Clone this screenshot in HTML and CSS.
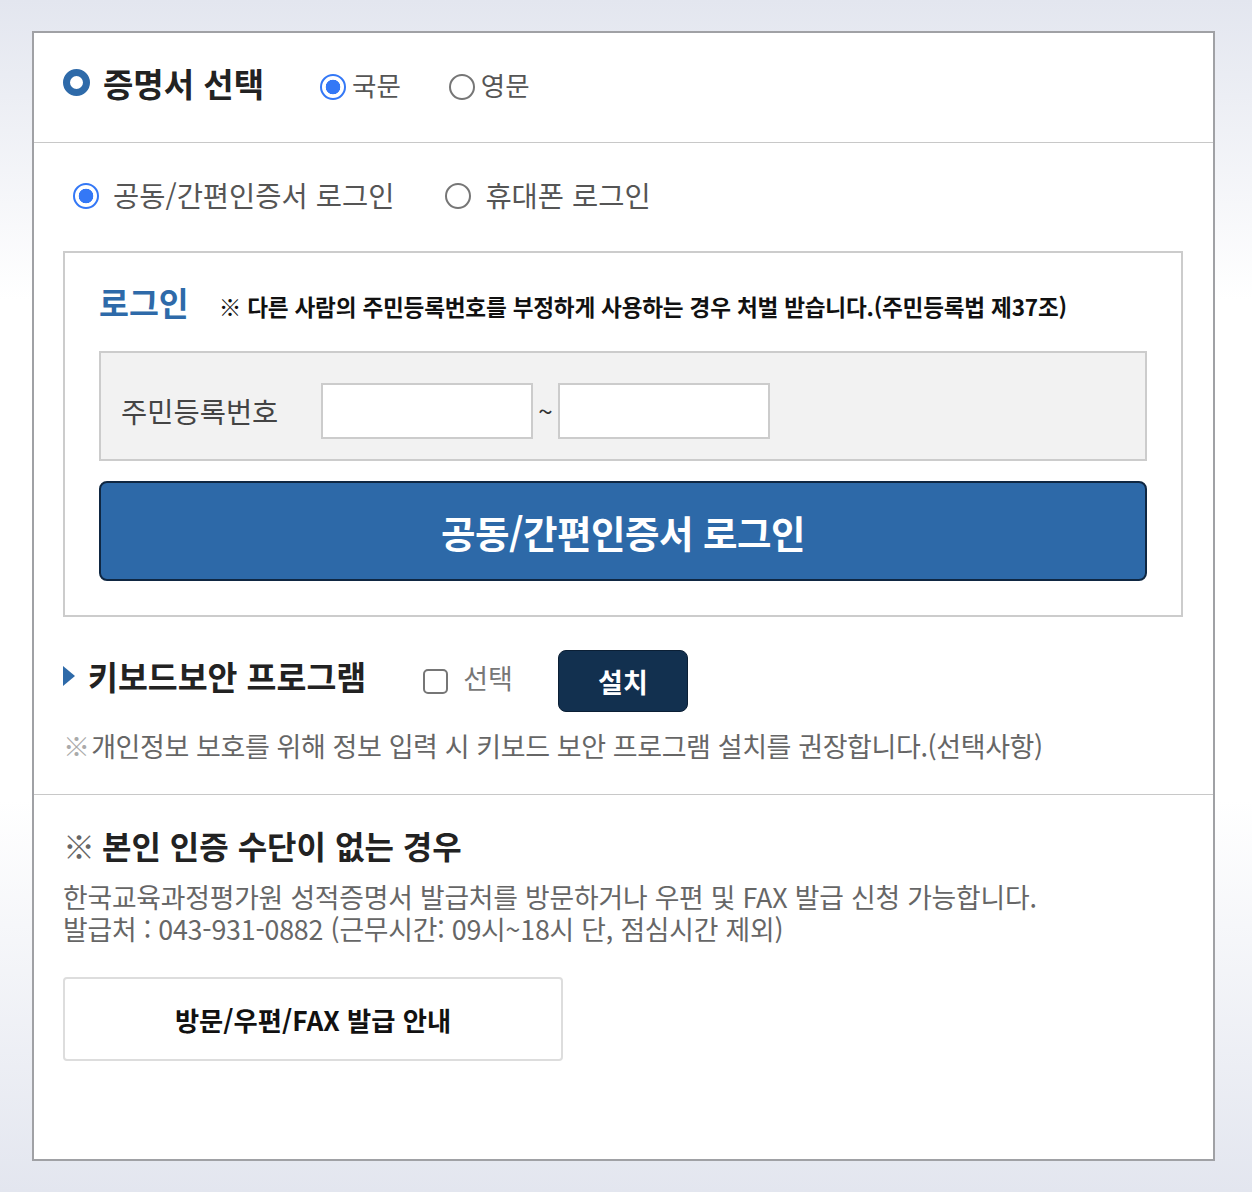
FILE: index.html
```html
<!DOCTYPE html>
<html lang="ko">
<head>
<meta charset="utf-8">
<title>증명서 선택</title>
<link rel="stylesheet" href="styles.css">
</head>
<body>
<div class="card">
  <div class="head">
    <span class="ring"></span>
    <h2 class="head-title">증명서 선택</h2>
    <label class="opt lang first"><input type="radio" class="radio" name="lang" checked><span>국문</span></label>
    <label class="opt lang"><input type="radio" class="radio" name="lang"><span>영문</span></label>
  </div>

  <div class="sec">
    <div class="method">
      <label class="opt m1"><input type="radio" class="radio" name="method" checked><span>공동/간편인증서 로그인</span></label>
      <label class="opt m2"><input type="radio" class="radio" name="method"><span>휴대폰 로그인</span></label>
    </div>

    <div class="login">
      <div class="login-head">
        <h3 class="login-title">로그인</h3>
        <p class="warn">※ 다른 사람의 주민등록번호를 부정하게 사용하는 경우 처벌 받습니다.(주민등록법 제37조)</p>
      </div>
      <div class="idbox">
        <span class="idlabel">주민등록번호</span>
        <input class="idin" type="text">
        <span class="tilde">~</span>
        <input class="idin" type="password">
      </div>
      <button class="loginbtn">공동/간편인증서 로그인</button>
    </div>

    <div class="kb">
      <span class="tri"></span>
      <h3 class="kb-title">키보드보안 프로그램</h3>
      <label class="chk"><input type="checkbox" class="box"><span>선택</span></label>
      <button class="install">설치</button>
    </div>
    <p class="note"><span class="mark">※</span> 개인정보 보호를 위해 정보 입력 시 키보드 보안 프로그램 설치를 권장합니다.(선택사항)</p>
  </div>

  <div class="sec3">
    <h3 class="nt-title"><span class="mark2">※</span> 본인 인증 수단이 없는 경우</h3>
    <div class="desc">
      <p class="desc-line">한국교육과정평가원 성적증명서 발급처를 방문하거나 우편 및 FAX 발급 신청 가능합니다.</p>
      <p class="desc-line">발급처 : 043-931-0882 (근무시간: 09시~18시 단, 점심시간 제외)</p>
    </div>
    <button class="visit">방문/우편/FAX 발급 안내</button>
  </div>
</div>
</body>
</html>
```

FILE: styles.css
```css
* { box-sizing: border-box; }
html, body { margin: 0; padding: 0; }
body {
  min-height: 1192px;
  background: linear-gradient(#e3e6ef 0px, #ffffff 300px, #ffffff 800px, #e3e6ef 1192px);
  font-family: "Noto Sans CJK KR", "Noto Sans", sans-serif;
  padding: 31px 0 0 32px;
}
.card {
  width: 1183px;
  height: 1130px;
  border: 2px solid #a0a1a5;
  background: #fff;
}
h2, h3, p { margin: 0; }

/* header */
.head {
  height: 110px;
  border-bottom: 1px solid #c8c8c8;
  display: flex;
  align-items: center;
  padding: 0 0 10px 29px;
}
.ring {
  width: 27px; height: 27px;
  border: 7px solid #2e6aa9;
  border-radius: 50%;
  filter: blur(0.4px);
  margin-right: 13px;
}
.head-title {
  font-size: 33px;
  font-weight: 700;
  color: #222;
  line-height: 40px;
  margin-right: 56px;
}
.opt { display: flex; align-items: center; cursor: pointer; }
.radio {
  appearance: none;
  -webkit-appearance: none;
  margin: 0;
  width: 26px; height: 26px;
  border: 2px solid #767676;
  border-radius: 50%;
  background: #fff;
  flex: none;
}
.radio:checked {
  border-color: #3478f6;
  background: radial-gradient(circle, #3478f6 0 7px, #fff 7.6px);
}
.lang { margin-top: 8px; }
.lang span { font-size: 26.5px; color: #555; margin-left: 6px; line-height: 32px; margin-top: -4px; }
.lang.first { margin-right: 48px; }

/* section 2 */
.sec {
  padding: 33px 30px 30px 29px;
  border-bottom: 1px solid #c8c8c8;
}
.method { display: flex; align-items: center; height: 40px; padding-left: 10px; }
.method span { font-size: 28.5px; color: #555; margin-left: 14px; line-height: 40px; margin-top: -3px; }
.m1 { margin-right: 51px; }

.login {
  margin-top: 35px;
  width: 1120px;
  border: 2px solid #cccccc;
  padding: 29px 34px 34px;
}
.login-head { display: flex; align-items: baseline; height: 40px; }
.login-title {
  font-size: 32.5px; font-weight: 700; color: #2e6aa9; line-height: 40px;
  margin-right: 30px;
}
.warn { font-size: 22.6px; font-weight: 700; color: #111; line-height: 30px; letter-spacing: -0.2px; }
.idbox {
  margin-top: 29px;
  height: 110px;
  background: #f2f2f2;
  border: 2px solid #cccccc;
  display: flex;
  align-items: center;
  padding: 28px 20px 18px;
}
.idlabel { font-size: 28.5px; color: #444; width: 200px; line-height: 36px; }
.idin {
  width: 212px; height: 56px;
  border: 2px solid #cccccc;
  background: #fff;
  margin: 0;
  font-size: 20px;
}
.tilde { width: 25px; text-align: center; font-size: 26px; color: #333; line-height: 30px; }
.loginbtn {
  display: block;
  margin-top: 20px;
  width: 100%;
  height: 100px;
  background: #2d69a8;
  border: 2px solid #0f2742;
  border-radius: 8px;
  color: #fff;
  font-family: inherit;
  font-size: 37.5px;
  font-weight: 700;
  letter-spacing: -0.5px;
}

.kb { display: flex; align-items: center; margin-top: 33px; height: 62px; }
.tri {
  width: 0; height: 0;
  border-top: 10px solid transparent;
  border-bottom: 10px solid transparent;
  border-left: 12px solid #2e6aa9;
  margin-right: 13px;
  margin-top: -10px;
}
.kb-title { font-size: 32.5px; font-weight: 700; color: #222; line-height: 40px; margin-right: 57px; margin-top: -10px; }
.chk { display: flex; align-items: center; margin-right: 45px; }
.box {
  appearance: none; -webkit-appearance: none; margin: 0;
  width: 25px; height: 25px;
  border: 2px solid #767676; border-radius: 5px; background: #fff;
}
.chk span { font-size: 27px; color: #777; margin-left: 15px; line-height: 32px; margin-top: -6px; }
.install {
  width: 130px; height: 62px;
  background: #12304f;
  border: 1px solid #0b1f35;
  border-radius: 8px;
  color: #fff;
  font-family: inherit;
  font-size: 27px;
  font-weight: 700;
}
.note { margin-top: 16px; font-size: 27px; color: #666; line-height: 36px; letter-spacing: -0.4px; }
.mark { color: #aaa; letter-spacing: -6px; }

/* section 3 */
.sec3 { padding: 30px 29px 0; }
.nt-title { font-size: 32px; font-weight: 700; color: #222; line-height: 40px; }
.mark2 { color: #666; letter-spacing: -2px; }
.desc { margin-top: 16px; }
.desc-line { font-size: 26.8px; color: #666; line-height: 32px; height: 32px; letter-spacing: -0.2px; }
.visit {
  display: block;
  margin-top: 32px;
  width: 500px;
  height: 84px;
  background: #fff;
  border: 2px solid #dddddd;
  border-radius: 4px;
  font-family: inherit;
  font-size: 26.3px;
  font-weight: 700;
  color: #111;
}
```
